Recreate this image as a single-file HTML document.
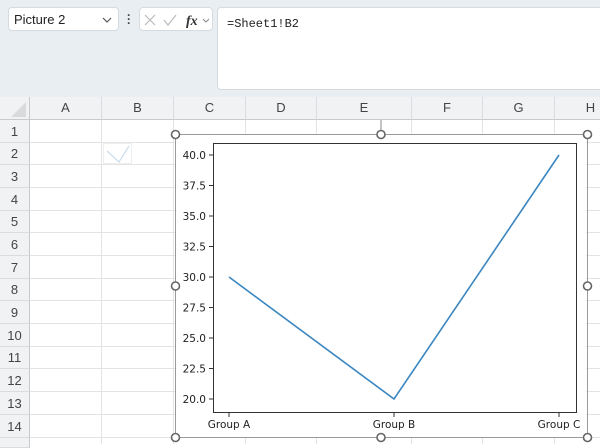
<!DOCTYPE html>
<html><head><style>
body{margin:0;width:600px;height:444px;overflow:hidden;background:#fff;font-family:"Liberation Sans",sans-serif;position:relative}
.a{position:absolute}
.top{left:0;top:0;width:600px;height:97px;background:#e9eef2}
.box{background:#fff;border:1px solid #d6dbe0;border-radius:4px;box-sizing:border-box}
.ch{top:97px;height:23px;background:#f0f2f4;font-size:13px;color:#444;text-align:center;line-height:22px;border-right:1px solid #dadcdf;box-sizing:border-box;border-bottom:1px solid #c8cacc}
.rh{left:0;width:30px;background:#f0f2f4;font-size:13px;color:#444;text-align:center;border-bottom:1px solid #dadcdf;border-right:1px solid #c8cacc;box-sizing:border-box}
.vl{top:120px;width:1px;height:324px;background:#e3e3e3}
.hl{left:30px;width:570px;height:1px;background:#e3e3e3}
</style></head><body>
<div class="a top"></div>
<div class="a box" style="left:8px;top:7px;width:111px;height:24px;font-size:13px;color:#222;padding:4px 0 0 5px">Picture 2<svg class="a" style="right:6px;top:9px" width="10" height="6"><path d="M1 1l4 4 4-4" stroke="#555" stroke-width="1.2" fill="none"/></svg></div>
<div class="a" style="left:127px;top:13px;color:#444;font-size:12px;font-weight:bold;line-height:4px">·<br>·<br>·</div>
<div class="a box" style="left:139px;top:7px;width:74px;height:24px;">
<svg width="74" height="24" class="a" style="left:0;top:0"><path d="M5 7l10 10M15 7L5 17" stroke="#bbb" stroke-width="1.2" fill="none"/><path d="M24 12l4 5 8-10" stroke="#bbb" stroke-width="1.2" fill="none"/><text x="46" y="17" font-family="Liberation Serif" font-style="italic" font-weight="bold" font-size="14" fill="#333">fx</text><path d="M63 11l3 3 3-3" stroke="#888" fill="none"/></svg></div>
<div class="a box" style="left:217px;top:7px;width:390px;height:83px;font-family:'Liberation Mono',monospace;font-size:12px;color:#222;padding:9px 0 0 9px">=Sheet1!B2</div>
<div class="a" style="left:0;top:97px;width:30px;height:23px;background:#f0f2f4;border-bottom:1px solid #c8cacc;border-right:1px solid #c8cacc;box-sizing:border-box"><svg width="28" height="22"><path d="M26 5V20H11z" fill="#d8dadc"/></svg></div>
<div class="a ch" style="left:30px;width:72px">A</div>
<div class="a ch" style="left:102px;width:72px">B</div>
<div class="a ch" style="left:174px;width:72px">C</div>
<div class="a ch" style="left:246px;width:71px">D</div>
<div class="a ch" style="left:317px;width:95px">E</div>
<div class="a ch" style="left:412px;width:71px">F</div>
<div class="a ch" style="left:483px;width:72px">G</div>
<div class="a ch" style="left:555px;width:72px">H</div>
<div class="a vl" style="left:101px"></div><div class="a vl" style="left:173px"></div><div class="a vl" style="left:245px"></div><div class="a vl" style="left:316px"></div><div class="a vl" style="left:411px"></div><div class="a vl" style="left:482px"></div><div class="a vl" style="left:554px"></div>
<div class="a rh" style="top:120px;height:23px;line-height:23px">1</div><div class="a hl" style="top:142px"></div>
<div class="a rh" style="top:143px;height:22px;line-height:22px">2</div><div class="a hl" style="top:164px"></div>
<div class="a rh" style="top:165px;height:23px;line-height:23px">3</div><div class="a hl" style="top:187px"></div>
<div class="a rh" style="top:188px;height:23px;line-height:23px">4</div><div class="a hl" style="top:210px"></div>
<div class="a rh" style="top:211px;height:22px;line-height:22px">5</div><div class="a hl" style="top:232px"></div>
<div class="a rh" style="top:233px;height:23px;line-height:23px">6</div><div class="a hl" style="top:255px"></div>
<div class="a rh" style="top:256px;height:23px;line-height:23px">7</div><div class="a hl" style="top:278px"></div>
<div class="a rh" style="top:279px;height:22px;line-height:22px">8</div><div class="a hl" style="top:300px"></div>
<div class="a rh" style="top:301px;height:23px;line-height:23px">9</div><div class="a hl" style="top:323px"></div>
<div class="a rh" style="top:324px;height:23px;line-height:23px">10</div><div class="a hl" style="top:346px"></div>
<div class="a rh" style="top:347px;height:22px;line-height:22px">11</div><div class="a hl" style="top:368px"></div>
<div class="a rh" style="top:369px;height:23px;line-height:23px">12</div><div class="a hl" style="top:391px"></div>
<div class="a rh" style="top:392px;height:23px;line-height:23px">13</div><div class="a hl" style="top:414px"></div>
<div class="a rh" style="top:415px;height:23px;line-height:23px">14</div><div class="a hl" style="top:437px"></div>
<div class="a rh" style="top:438px;height:10px"></div>
<svg class="a" style="left:103px;top:143px" width="30" height="22"><rect x="0.5" y="0.5" width="28" height="20" fill="#fff" stroke="#eee"/><path d="M4 8l12 11 10-16" stroke="#bcd6ec" fill="none"/></svg>
<svg class="a" style="left:0;top:0" width="600" height="444">
<rect x="176" y="135" width="410" height="302" fill="#fff"/>
<line x1="381" y1="120" x2="381" y2="134" stroke="#888"/>
<rect x="175.5" y="134.5" width="412" height="303" fill="none" stroke="#9a9a9a"/>
<rect x="213.5" y="143.5" width="363" height="269" fill="none" stroke="#333"/>
<g stroke="#333">
<line x1="209" y1="155" x2="213" y2="155"/><line x1="209" y1="185.5" x2="213" y2="185.5"/><line x1="209" y1="216" x2="213" y2="216"/><line x1="209" y1="246.5" x2="213" y2="246.5"/><line x1="209" y1="277" x2="213" y2="277"/><line x1="209" y1="307.5" x2="213" y2="307.5"/><line x1="209" y1="338" x2="213" y2="338"/><line x1="209" y1="368.5" x2="213" y2="368.5"/><line x1="209" y1="399" x2="213" y2="399"/>
<line x1="229" y1="413" x2="229" y2="417"/><line x1="394" y1="413" x2="394" y2="417"/><line x1="559" y1="413" x2="559" y2="417"/>
</g>
<g font-family="DejaVu Sans" font-size="10.5" fill="#222" text-anchor="end">
<text x="206" y="159">40.0</text><text x="206" y="189.5">37.5</text><text x="206" y="220">35.0</text><text x="206" y="250.5">32.5</text><text x="206" y="281">30.0</text><text x="206" y="311.5">27.5</text><text x="206" y="342">25.0</text><text x="206" y="372.5">22.5</text><text x="206" y="403">20.0</text>
</g>
<g font-family="DejaVu Sans" font-size="10.5" fill="#222" text-anchor="middle">
<text x="229" y="428">Group A</text><text x="394" y="428">Group B</text><text x="559" y="428">Group C</text>
</g>
<polyline points="229,277 394,399 559,155" fill="none" stroke="#3a86c0" stroke-width="1.6"/>
<g fill="#fff" stroke="#666" stroke-width="1.6">
<circle cx="175.5" cy="134.5" r="4"/><circle cx="381" cy="134.5" r="4"/><circle cx="587.5" cy="134.5" r="4"/>
<circle cx="175.5" cy="286" r="4"/><circle cx="587.5" cy="286" r="4"/>
<circle cx="175.5" cy="437.5" r="4"/><circle cx="381" cy="437.5" r="4"/><circle cx="587.5" cy="437.5" r="4"/>
</g>
</svg>
</body></html>
